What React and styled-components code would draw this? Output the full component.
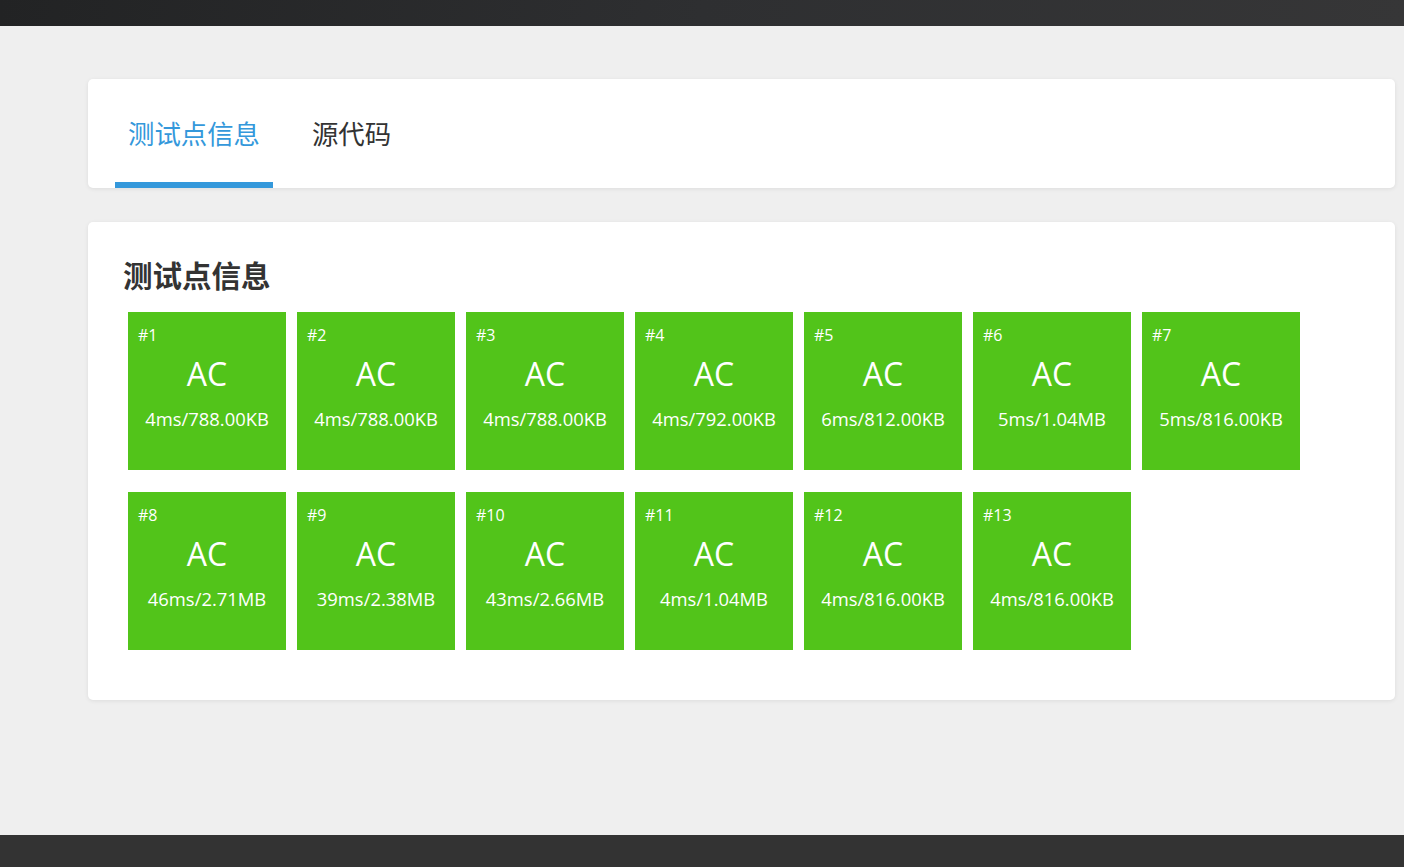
import React, { useState } from "react";
import styled, { createGlobalStyle } from "styled-components";

const GlobalStyle = createGlobalStyle`
  html, body {
    margin: 0;
    padding: 0;
    background: #efefef;
    font-family: "Open Sans", "Noto Sans CJK SC", sans-serif;
  }
`;

const cases = [
  { id: 1, time: "4ms", mem: "788.00KB" },
  { id: 2, time: "4ms", mem: "788.00KB" },
  { id: 3, time: "4ms", mem: "788.00KB" },
  { id: 4, time: "4ms", mem: "792.00KB" },
  { id: 5, time: "6ms", mem: "812.00KB" },
  { id: 6, time: "5ms", mem: "1.04MB" },
  { id: 7, time: "5ms", mem: "816.00KB" },
  { id: 8, time: "46ms", mem: "2.71MB" },
  { id: 9, time: "39ms", mem: "2.38MB" },
  { id: 10, time: "43ms", mem: "2.66MB" },
  { id: 11, time: "4ms", mem: "1.04MB" },
  { id: 12, time: "4ms", mem: "816.00KB" },
  { id: 13, time: "4ms", mem: "816.00KB" },
];

function App() {
  const [tab, setTab] = useState(0);
  return (
    <>
      <GlobalStyle />
      <Page>
        <TopBar />
        <Main>
          <Card>
            <Tabs>
              <Tab active={tab === 0} onClick={() => setTab(0)}>
                测试点信息
              </Tab>
              <Tab active={tab === 1} onClick={() => setTab(1)}>
                源代码
              </Tab>
            </Tabs>
          </Card>
          <Panel>
            <Title>测试点信息</Title>
            <Grid>
              {cases.map((c) => (
                <Case key={c.id}>
                  <CaseId>#{c.id}</CaseId>
                  <Status>AC</Status>
                  <Usage>
                    {c.time}/{c.mem}
                  </Usage>
                </Case>
              ))}
            </Grid>
          </Panel>
        </Main>
        <Footer />
      </Page>
    </>
  );
}

const Page = styled.div`
  min-height: 867px;
  display: flex;
  flex-direction: column;
`;
const TopBar = styled.div`
  height: 26px;
  background: linear-gradient(100deg, #222324 0%, #2e2f31 50%, #363637 100%);
`;
const Main = styled.div`
  flex: 1;
  padding: 53px 9px 0 88px;
  display: flex;
  flex-direction: column;
  gap: 34px;
`;
const Card = styled.div`
  background: #fff;
  border-radius: 5px;
  box-shadow: 0 1px 4px rgba(0, 0, 0, 0.08);
  padding: 0 27px;
  height: 109px;
  display: flex;
`;
const Tabs = styled.div`
  display: flex;
  gap: 26px;
`;
const Tab = styled.div`
  padding: 0 13px 0 13px;
  height: 109px;
  box-sizing: border-box;
  display: flex;
  align-items: center;
  padding-top: 4px;
  font-size: 26.4px;
  color: ${(p) => (p.active ? "#3498db" : "#333")};
  border-bottom: 6px solid ${(p) => (p.active ? "#3498db" : "transparent")};
  cursor: pointer;
  font-family: "Noto Sans CJK SC", sans-serif;
`;
const Panel = styled.div`
  background: #fff;
  border-radius: 5px;
  box-shadow: 0 1px 4px rgba(0, 0, 0, 0.08);
  padding: 30px 35px 50px;
`;
const Title = styled.h2`
  margin: 0 0 16px;
  font-size: 29.5px;
  line-height: 44px;
  font-weight: 700;
  color: #333;
  font-family: "Noto Sans CJK SC", sans-serif;
`;
const Grid = styled.div`
  display: grid;
  grid-template-columns: repeat(7, 158px);
  column-gap: 11px;
  row-gap: 22px;
  padding-left: 5px;
`;
const Case = styled.div`
  width: 158px;
  height: 158px;
  background: #52c41a;
  color: #fff;
  box-sizing: border-box;
  padding: 12px 10px 0;
  display: flex;
  flex-direction: column;
`;
const CaseId = styled.div`
  font-size: 16px;
  line-height: 22px;
  font-weight: 500;
`;
const Status = styled.div`
  text-align: center;
  font-size: 32px;
  line-height: 34px;
  margin-top: 11px;
`;
const Usage = styled.div`
  text-align: center;
  font-size: 18.4px;
  line-height: 24px;
  font-weight: 500;
  margin-top: 16px;
`;
const Footer = styled.div`
  height: 32px;
  background: #333;
`;

export default App;
